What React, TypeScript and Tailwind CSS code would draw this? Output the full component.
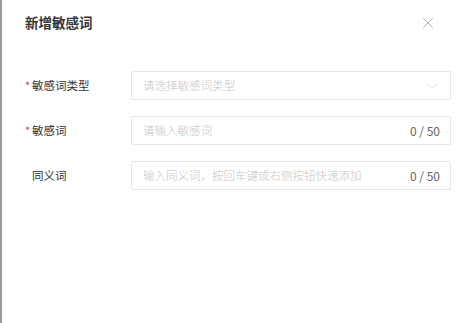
import { ChevronDown, X } from "lucide-react";

const font = { fontFamily: '"Noto Sans CJK SC", "Noto Sans", sans-serif' };

function Label({ text, required }: { text: string; required?: boolean }) {
  return (
    <div className="flex w-[106px] shrink-0 items-center text-[11.5px] text-[#333]">
      <span className="w-[7px] text-[11px] leading-none text-[#e4393c]">{required ? "*" : ""}</span>
      <span>{text}</span>
    </div>
  );
}

function Field({ placeholder, select }: { placeholder: string; select?: boolean }) {
  return (
    <div className="flex h-[29px] w-[320px] items-center justify-between rounded-[2px] border border-[#e6e6e6] bg-white pl-[11px] pr-[10px]">
      <span className="text-[11.5px] font-light text-[#c6c6c6]">{placeholder}</span>
      {select ? (
        <ChevronDown size={20} strokeWidth={0.8} className="-mr-[2px] text-[#c8c8c8]" />
      ) : (
        <span className="text-[12px] text-[#666]">0 / 50</span>
      )}
    </div>
  );
}

export default function App() {
  return (
    <div className="flex h-[323px] w-[474px] bg-white" style={font}>
      <div className="w-[2px] shrink-0 bg-[#9a9a9a]" />
      <div className="flex flex-1 flex-col">
        <div className="flex h-[45px] items-center justify-between pl-[23px] pr-[37px]">
          <h1 className="text-[13.5px] font-bold text-[#333]">新增敏感词</h1>
          <X size={18} strokeWidth={1} className="text-[#999]" />
        </div>
        <div className="mt-[26px] flex flex-col gap-[16px] pl-[23px]">
          <div className="flex items-center">
            <Label text="敏感词类型" required />
            <Field placeholder="请选择敏感词类型" select />
          </div>
          <div className="flex items-center">
            <Label text="敏感词" required />
            <Field placeholder="请输入敏感词" />
          </div>
          <div className="flex items-center">
            <Label text="同义词" />
            <Field placeholder="输入同义词，按回车键或右侧按钮快速添加" />
          </div>
        </div>
      </div>
    </div>
  );
}
